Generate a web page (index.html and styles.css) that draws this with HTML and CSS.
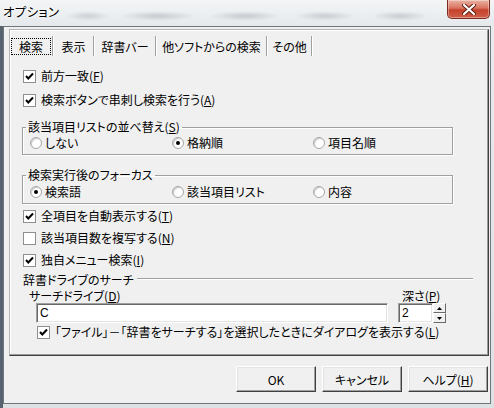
FILE: index.html
```html
<!DOCTYPE html>
<html lang="ja">
<head>
  <meta charset="UTF-8">
  <title>オプション</title>
  <link rel="stylesheet" href="styles.css">
</head>
<body>
  <div class="window">
    <div class="titlebar">
      <span class="title">オプション</span>
      <span class="close-btn">
        <svg width="14" height="11" viewBox="0 0 14 11"><path d="M2 1 L12 10 M12 1 L2 10" stroke="#5a1a10" stroke-width="4" stroke-linecap="round"/><path d="M2 1 L12 10 M12 1 L2 10" stroke="#fff" stroke-width="2.2" stroke-linecap="round"/></svg>
      </span>
    </div>
    <div class="client">
      <div class="tab-panel">
        <div class="tabs">
          <span class="tab active"><span class="focus">検索</span></span>
          <span class="tab">表示</span>
          <span class="tab">辞書バー</span>
          <span class="tab">他ソフトからの検索</span>
          <span class="tab">その他</span>
        </div>
        <div class="page">
          <div class="check">
            <span class="box checked"><svg width="11" height="11" viewBox="0 0 11 11"><path d="M2 5 L4.3 7.5 L9 2.5" fill="none" stroke="#000" stroke-width="2"/></svg></span>
            <span>前方一致(<u>F</u>)</span>
          </div>
          <div class="check gap-8">
            <span class="box checked"><svg width="11" height="11" viewBox="0 0 11 11"><path d="M2 5 L4.3 7.5 L9 2.5" fill="none" stroke="#000" stroke-width="2"/></svg></span>
            <span>検索ボタンで串刺し検索を行う(<u>A</u>)</span>
          </div>

          <fieldset class="group first">
            <legend>該当項目リストの並べ替え(<u>S</u>)</legend>
            <div class="radio-row">
              <span class="radio"><span class="dot"></span>しない</span>
              <span class="radio"><span class="dot on"></span>格納順</span>
              <span class="radio"><span class="dot"></span>項目名順</span>
            </div>
          </fieldset>

          <fieldset class="group second">
            <legend>検索実行後のフォーカス</legend>
            <div class="radio-row">
              <span class="radio"><span class="dot on"></span>検索語</span>
              <span class="radio"><span class="dot"></span>該当項目リスト</span>
              <span class="radio"><span class="dot"></span>内容</span>
            </div>
          </fieldset>

          <div class="check gap-4">
            <span class="box checked"><svg width="11" height="11" viewBox="0 0 11 11"><path d="M2 5 L4.3 7.5 L9 2.5" fill="none" stroke="#000" stroke-width="2"/></svg></span>
            <span>全項目を自動表示する(<u>T</u>)</span>
          </div>
          <div class="check gap-6">
            <span class="box"></span>
            <span>該当項目数を複写する(<u>N</u>)</span>
          </div>
          <div class="check gap-6">
            <span class="box checked"><svg width="11" height="11" viewBox="0 0 11 11"><path d="M2 5 L4.3 7.5 L9 2.5" fill="none" stroke="#000" stroke-width="2"/></svg></span>
            <span>独自メニュー検索(<u>I</u>)</span>
          </div>

          <div class="section-head">
            <span>辞書ドライブのサーチ</span>
            <span class="etched-line"></span>
          </div>
          <div class="drive-row">
            <div class="drive-field">
              <span class="field-label">サーチドライブ(<u>D</u>)</span>
              <div class="edit drive-edit">C</div>
            </div>
            <div class="depth-field">
              <span class="field-label">深さ(<u>P</u>)</span>
              <div class="spin">
                <div class="edit depth-edit">2</div>
                <div class="spin-btns">
                  <span class="spin-btn"><svg width="5" height="3" viewBox="0 0 5 3"><path d="M2.5 0 L5 3 L0 3 Z" fill="#000"/></svg></span>
                  <span class="spin-btn"><svg width="5" height="3" viewBox="0 0 5 3"><path d="M0 0 L5 0 L2.5 3 Z" fill="#000"/></svg></span>
                </div>
              </div>
            </div>
          </div>
          <div class="check dialog-check">
            <span class="box checked"><svg width="11" height="11" viewBox="0 0 11 11"><path d="M2 5 L4.3 7.5 L9 2.5" fill="none" stroke="#000" stroke-width="2"/></svg></span>
            <span>「ファイル」－「辞書をサーチする」を選択したときにダイアログを表示する(<u>L</u>)</span>
          </div>
        </div>
      </div>
      <div class="buttons">
        <button class="btn">OK</button>
        <button class="btn">キャンセル</button>
        <button class="btn">ヘルプ(<u>H</u>)</button>
      </div>
    </div>
  </div>
</body>
</html>
```

FILE: styles.css
```css
* {
  box-sizing: border-box;
}
body {
  margin: 0;
  width: 494px;
  height: 408px;
  overflow: hidden;
  font-family: "Noto Sans CJK JP", sans-serif;
  font-size: 12px;
  font-feature-settings: "palt";
  color: #000;
}
u {
  text-decoration: underline;
  text-underline-offset: 1px;
}
.window {
  width: 494px;
  height: 408px;
  display: flex;
  flex-direction: column;
  padding: 0 3px 4px 3px;
  background:
    linear-gradient(to right, #56626d 3px, transparent 3px) 0 26px / 100% 100% no-repeat,
    linear-gradient(#e9ecee, #dde1e4);
}
.titlebar {
  height: 26px;
  margin: 0 -3px;
  padding: 0 4px 0 3px;
  display: flex;
  justify-content: space-between;
  align-items: flex-start;
  background:
    radial-gradient(ellipse 22px 5px at 88px 16px, rgba(110,120,130,.25), transparent),
    radial-gradient(ellipse 38px 5px at 158px 16px, rgba(110,120,130,.3), transparent),
    radial-gradient(ellipse 36px 5px at 245px 16px, rgba(110,120,130,.3), transparent),
    radial-gradient(ellipse 30px 5px at 325px 16px, rgba(110,120,130,.28), transparent),
    radial-gradient(ellipse 28px 5px at 400px 16px, rgba(110,120,130,.28), transparent),
    linear-gradient(#f3f5f6, #e6e9ec);
}
.title {
  margin-top: 3px;
  font-size: 12.5px;
  line-height: 18px;
  letter-spacing: 0.3px;
  text-shadow: 0 0 5px #fff, 0 0 3px #fff;
}
.close-btn {
  width: 43px;
  height: 19px;
  display: flex;
  align-items: center;
  justify-content: center;
  border: 1px solid #7a2a1e;
  border-top: none;
  border-radius: 0 0 5px 5px;
  background: linear-gradient(#eab3a4 0%, #d9735f 45%, #c4412b 55%, #d0604a 100%);
  box-shadow: inset 0 0 0 1px rgba(255,255,255,.35);
}
.client {
  flex: 1;
  display: flex;
  flex-direction: column;
  background: #f0f0f0;
  border: 1px solid #6f767c;
  padding: 2px 1px 0 5px;
}
.tab-panel {
  height: 327px;
  border: 1px solid;
  border-color: #b4b4b4 #404040 #404040 #b4b4b4;
  box-shadow: inset -1px -1px 0 #9a9a9a, inset 1px 1px 0 #fff;
}
.tabs {
  display: flex;
  height: 20px;
  margin-top: 6px;
}
.tab {
  display: flex;
  align-items: center;
  justify-content: center;
  line-height: 15px;
  border-right: 1px solid #a0a0a0;
  box-shadow: 1px 0 0 #fff;
  margin-right: 1px;
}
.tab:nth-child(1) { width: 43px; }
.tab:nth-child(2) { width: 40px; }
.tab:nth-child(3) { width: 61px; }
.tab:nth-child(4) { width: 110px; }
.tab:nth-child(5) { width: 44px; }
.focus {
  display: block;
  width: 40px;
  height: 17px;
  line-height: 15px;
  text-align: center;
  border: 1px dotted #000;
}
.page {
  display: flex;
  flex-direction: column;
  padding: 12px 0 0 12px;
}
.check {
  display: flex;
  align-items: center;
  gap: 5px;
  height: 16px;
  line-height: 16px;
  margin-left: 1px;
}
.gap-4 { margin-top: 4px; }
.gap-6 { margin-top: 6px; }
.gap-8 { margin-top: 8px; }
.box {
  width: 13px;
  height: 13px;
  flex: none;
  display: flex;
  align-items: center;
  justify-content: center;
  background: #fff;
  border: 1px solid #8e8f8f;
}
.group {
  width: 431px;
  min-width: 0;
  margin: 11px 0 0 0;
  padding: 0 6px 3px 7px;
  border: 1px solid #a0a0a0;
  box-shadow: inset 1px 1px 0 #fff, 1px 1px 0 #fff;
}
.group.second {
  margin-top: 12px;
}
.group legend {
  margin-left: -4px;
  padding: 0 2px;
  line-height: 16px;
}
.radio-row {
  display: grid;
  grid-template-columns: 142px 141px auto;
  height: 16px;
}
.group.second .radio-row {
  margin-top: 1px;
}
.radio {
  display: flex;
  align-items: center;
  gap: 3px;
  line-height: 16px;
}
.dot {
  width: 12px;
  height: 12px;
  flex: none;
  border-radius: 50%;
  background: #fff;
  border: 1px solid #a7a7a7;
  box-shadow: inset 1px 1px 1px #c8c8c8;
  display: flex;
  align-items: center;
  justify-content: center;
}
.dot.on::after {
  content: "";
  width: 4px;
  height: 4px;
  border-radius: 50%;
  background: #000;
}
.section-head {
  display: flex;
  align-items: center;
  width: 450px;
  height: 16px;
  margin-top: 4px;
  margin-left: 1px;
  line-height: 16px;
}
.etched-line {
  flex: 1;
  height: 2px;
  margin-left: 3px;
  margin-top: -3px;
  border-top: 1px solid #a0a0a0;
  border-bottom: 1px solid #fff;
}
.drive-row {
  display: flex;
  gap: 10px;
}
.field-label {
  display: block;
  height: 15px;
  line-height: 15px;
}
.drive-field .field-label {
  margin-left: 7px;
}
.depth-field .field-label {
  margin-left: 4px;
}
.edit {
  height: 20px;
  background: #fff;
  border: 1px solid;
  border-color: #a0a0a0 #fff #fff #a0a0a0;
  box-shadow: inset 1px 1px 0 #696969, inset -1px -1px 0 #e3e3e3;
  padding: 0 3px;
  font-family: "Liberation Sans", sans-serif;
  font-size: 12px;
  line-height: 18px;
}
.drive-edit {
  width: 352px;
  margin-left: 14px;
}
.spin {
  display: flex;
}
.depth-edit {
  width: 35px;
}
.spin-btns {
  display: flex;
  flex-direction: column;
  width: 13px;
  height: 20px;
}
.spin-btn {
  height: 10px;
  display: flex;
  align-items: center;
  justify-content: center;
  background: #f0f0f0;
  border: 1px solid;
  border-color: #fff #696969 #696969 #fff;
}
.dialog-check {
  margin-top: 1px;
  margin-left: 15px;
}
.buttons {
  display: flex;
  justify-content: flex-end;
  gap: 6px;
  margin-top: 10px;
  padding-right: 1px;
}
.btn {
  width: 80px;
  height: 26px;
  padding: 0;
  font-family: "Noto Sans CJK JP", sans-serif;
  font-size: 12px;
  font-feature-settings: "palt";
  color: #000;
  background: #f0f0f0;
  border: 1px solid;
  border-color: #fff #404040 #404040 #fff;
  box-shadow: inset -1px -1px 0 #a0a0a0, inset 1px 1px 0 #e3e3e3;
}
```
